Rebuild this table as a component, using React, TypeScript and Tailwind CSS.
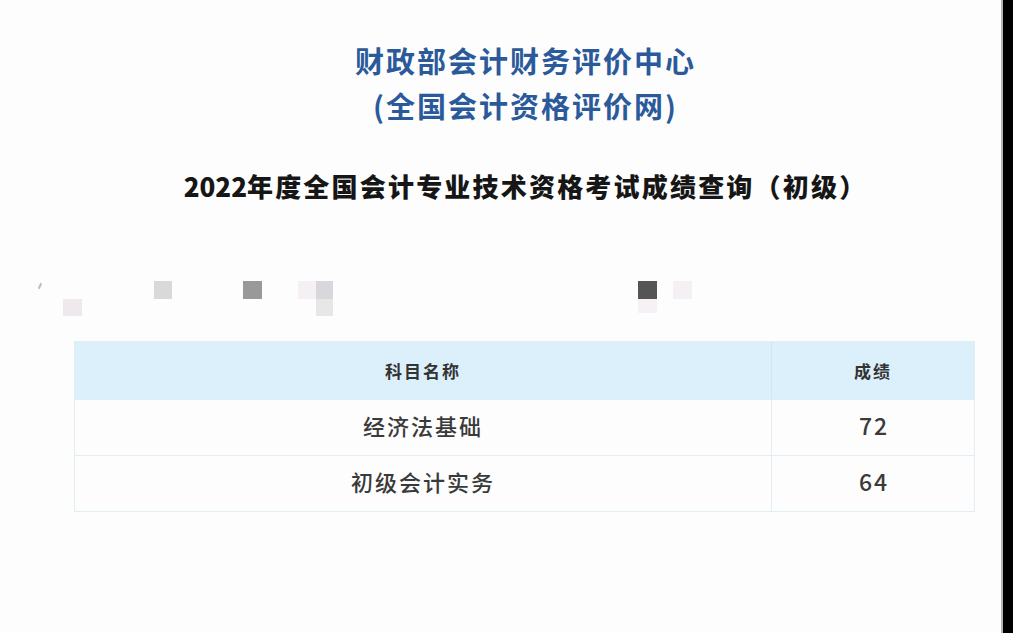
import React from "react"

const cjk = { fontFamily: '"Noto Sans CJK SC", "Noto Sans", sans-serif' }

// pixelated mosaic blocks covering the candidate's name / id
const mosaic = [
    { x: 63, y: 18, w: 19, h: 17, c: "#ede9ed" },
    { x: 154, y: 0, w: 18, h: 18, c: "#d9d9d9" },
    { x: 243, y: 0, w: 19, h: 18, c: "#999999" },
    { x: 298, y: 0, w: 18, h: 18, c: "#f4f0f4" },
    { x: 316, y: 0, w: 17, h: 18, c: "#d8d8dc" },
    { x: 316, y: 18, w: 17, h: 17, c: "#e7e7e7" },
    { x: 638, y: 0, w: 19, h: 18, c: "#555555" },
    { x: 638, y: 18, w: 19, h: 14, c: "#f6f1f5" },
    { x: 673, y: 0, w: 19, h: 18, c: "#f5f0f3" },
]

const rows = [
    { name: "经济法基础", score: "72" },
    { name: "初级会计实务", score: "64" },
]

export default function App() {
    return (
        <div className="flex h-[633px] w-[1013px] overflow-hidden bg-[#fdfdfd]" style={cjk}>
            <div className="flex-1">
                <div className="pt-[38px] pl-[50px] text-center text-[29px] font-bold leading-[45px] tracking-[2px] text-[#2b5a9b]">
                    <div>财政部会计财务评价中心</div>
                    <div>(全国会计资格评价网)</div>
                </div>

                <div className="mt-[38px] pl-[50px] text-center text-[26px] font-black leading-[40px] tracking-[2.2px] text-[#161616]">
                    <span className="tracking-[0px]">2022</span>年度全国会计专业技术资格考试成绩查询（初级）
                </div>

                <div className="relative mt-[75px] h-[35px]">
                    <div className="absolute left-[39px] top-[2px] h-[6px] w-[2px] rotate-[25deg] bg-[#bdbdbd]" />
                    {mosaic.map((m, i) => (
                        <div
                            key={i}
                            className="absolute"
                            style={{ left: m.x, top: m.y, width: m.w, height: m.h, background: m.c }}
                        />
                    ))}
                </div>

                <div className="ml-[74px] mt-[25px] w-[901px] border border-[#e1eef4]">
                    <div className="flex h-[57px] items-center bg-[#dcf0fb] text-[17px] font-bold tracking-[2px] text-[#333]">
                        <div className="flex h-full w-[697px] items-center justify-center border-r border-[#d3e6ef]">科目名称</div>
                        <div className="flex-1 text-center">成绩</div>
                    </div>
                    {rows.map((r) => (
                        <div key={r.name} className="flex h-[56px] border-t border-[#e1eef4] text-[22px] font-medium tracking-[2px] text-[#3a3a3a]">
                            <div className="flex w-[697px] items-center justify-center border-r border-[#e1eef4] pb-[5px]">{r.name}</div>
                            <div className="flex flex-1 items-center justify-center pb-[5px] pl-[2px] text-[23px] tracking-[2px]">{r.score}</div>
                        </div>
                    ))}
                </div>
            </div>
            <div className="w-[2px] bg-[#b5b5b5]" />
            <div className="w-[10px] bg-black" />
        </div>
    )
}
